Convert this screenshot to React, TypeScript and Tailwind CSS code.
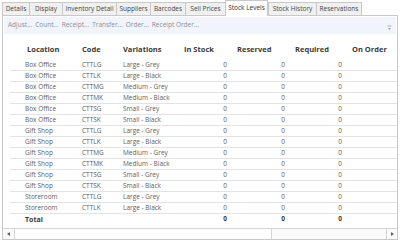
import React from 'react';

const tabs = [
  { label: 'Details', w: 27 },
  { label: 'Display', w: 33 },
  { label: 'Inventory Detail', w: 54 },
  { label: 'Suppliers', w: 34 },
  { label: 'Barcodes', w: 35 },
  { label: 'Sell Prices', w: 40 },
  { label: 'Stock Levels', w: 43, active: true },
  { label: 'Stock History', w: 48 },
  { label: 'Reservations', w: 46 },
];

const actions = ['Adjust...', 'Count...', 'Receipt...', 'Transfer...', 'Order...', 'Receipt Order...'];

const variations: [string, string][] = [
  ['CTTLG', 'Large - Grey'],
  ['CTTLK', 'Large - Black'],
  ['CTTMG', 'Medium - Grey'],
  ['CTTMK', 'Medium - Black'],
  ['CTTSG', 'Small - Grey'],
  ['CTTSK', 'Small - Black'],
];

const rows = [
  ...variations.map(([code, v]) => ({ loc: 'Box Office', code, v })),
  ...variations.map(([code, v]) => ({ loc: 'Gift Shop', code, v })),
  ...variations.slice(0, 2).map(([code, v]) => ({ loc: 'Storeroom', code, v })),
];

const grid = 'grid grid-cols-[70px_41px_61px_53px_58px_57px_1fr]';

export default function App() {
  return (
    <div className="w-[400px] h-[241px] bg-white overflow-hidden font-['Open_Sans',sans-serif] text-[6.5px] leading-none">
      {/* Tabs */}
      <div className="flex items-end h-[15px] pl-[2px]">
        {tabs.map((t) =>
          t.active ? (
            <div
              key={t.label}
              style={{ width: t.w }}
              className="relative z-10 -mb-px h-[16px] flex items-center justify-center border border-b-0 border-[#c8c8c8] bg-white text-[#333] pb-[1px]"
            >
              {t.label}
            </div>
          ) : (
            <div
              key={t.label}
              style={{ width: t.w }}
              className="h-[13px] flex items-center justify-center border border-b-0 border-r-0 last:border-r border-[#c8c8c8] bg-[#f0f0f0] text-[#444] [&+div]:border-l"
            >
              {t.label}
            </div>
          )
        )}
      </div>

      {/* Panel */}
      <div className="mx-[2px] w-[396px] h-[225px] border border-[#c8c8c8] flex flex-col">
        {/* Toolbar */}
        <div className="mt-[1px] mx-px h-[17px] bg-[#f1f5fb] flex items-center justify-between pl-[4px] pr-[4px] shrink-0">
          <div className="flex gap-[3px] text-[#8a8f98]">
            {actions.map((a) => (
              <span key={a}>{a}</span>
            ))}
          </div>
          <svg width="5" height="6" viewBox="0 0 5 6" className="mt-[5px]">
            <line x1="0.5" y1="1" x2="4.5" y2="1" stroke="#9aa0a8" strokeWidth="0.8" />
            <path d="M1 3 L4 3 L2.5 5 Z" fill="#9aa0a8" />
          </svg>
        </div>

        {/* Table */}
        <div className="pl-[7px] mt-[10px]">
          <div className={`${grid} h-[11px] items-center text-[7.5px] font-bold text-[#3a3a3a]`}>
            <span className="pl-[17px]">Location</span>
            <span className="pl-[2px]">Code</span>
            <span className="pl-[2px]">Variations</span>
            <span className="pl-[2px]">In Stock</span>
            <span className="pl-[2px]">Reserved</span>
            <span className="pl-[2px]">Required</span>
            <span className="pl-[2px]">On Order</span>
          </div>
          <div className="mt-[5px]">
            {rows.map((r, i) => (
              <div key={i} className={`${grid} h-[11px] items-center border-b border-[#e3e3e3] text-[#606060]`}>
                <span className="pl-[15px]">{r.loc}</span>
                <span className="pl-[2px]">{r.code}</span>
                <span className="pl-[2px]">{r.v}</span>
                <span className="text-right pr-[8px]">0</span>
                <span className="text-right pr-[8px]">0</span>
                <span className="text-right pr-[8px]">0</span>
                <span />
              </div>
            ))}
            <div className={`${grid} h-[11px] items-center font-bold text-[#3a3a3a]`}>
              <span className="pl-[15px] text-[7px]">Total</span>
              <span />
              <span />
              <span className="text-right pr-[8px]">0</span>
              <span className="text-right pr-[8px]">0</span>
              <span className="text-right pr-[8px]">0</span>
              <span />
            </div>
          </div>
        </div>

        {/* Horizontal scrollbar */}
        <div className="mt-auto h-[11px] border-t border-[#d4d4d4] flex bg-[#fafafa] shrink-0">
          <div className="w-[12px] flex items-center justify-center border-r border-[#d4d4d4]">
            <svg width="3" height="4" viewBox="0 0 3 4">
              <path d="M3 0 L0 2 L3 4 Z" fill="#606060" />
            </svg>
          </div>
          <div className="w-[257px] bg-white border-r border-[#d4d4d4]" />
          <div className="flex-1" />
          <div className="w-[11px] flex items-center justify-center border-l border-[#d4d4d4]">
            <svg width="3" height="4" viewBox="0 0 3 4">
              <path d="M0 0 L3 2 L0 4 Z" fill="#606060" />
            </svg>
          </div>
        </div>
      </div>
    </div>
  );
}
